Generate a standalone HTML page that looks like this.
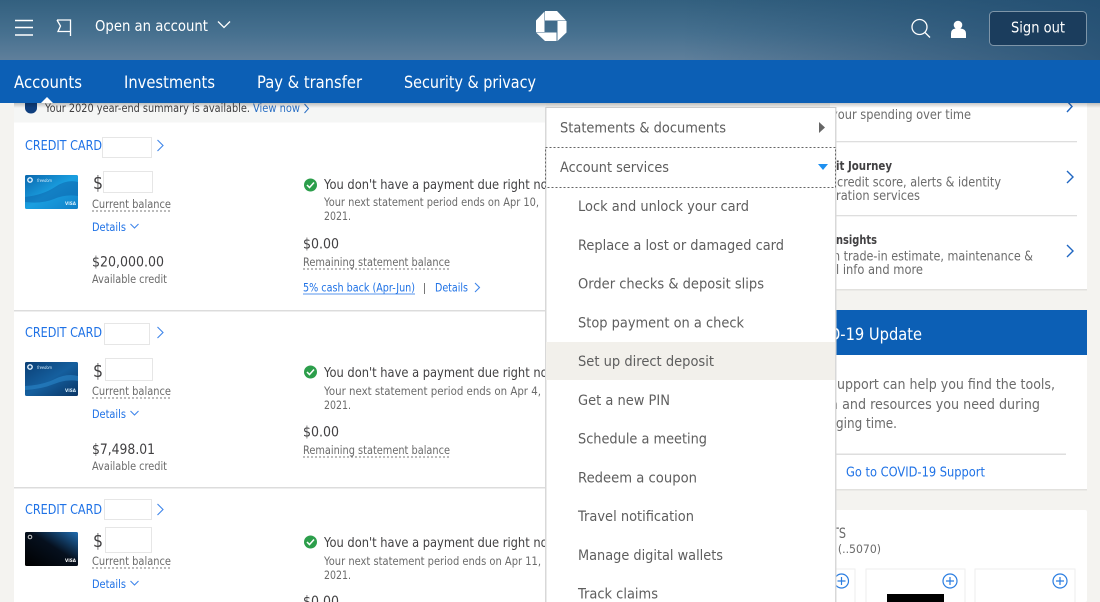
<!DOCTYPE html>
<html lang="en"><head><meta charset="utf-8"><title>Accounts</title>
<style>
html,body{margin:0;padding:0;width:1100px;height:602px;overflow:hidden;background:#f4f3f0}
svg{display:block}
text{font-family:"DejaVu Sans","Liberation Sans",sans-serif;white-space:pre}
.w{fill:#fff}.d{fill:#414042}.g{fill:#6b6b6b}.b{fill:#1f72e6}.m{fill:#5e5e5e}
.bl{fill:none;stroke:#3f86ea;stroke-width:1.100}
.dash{stroke:#777;stroke-width:1;stroke-dasharray:2 2}
.box{fill:#fff;stroke:#e6e6e6;stroke-width:1}
</style></head><body>
<svg width="1100" height="602" viewBox="0 0 1100 602" xmlns="http://www.w3.org/2000/svg" lang="en">
<defs>
<linearGradient id="hb" x1="0" y1="0" x2="0" y2="1"><stop offset="0" stop-color="#33607f"/><stop offset=".55" stop-color="#46708f"/><stop offset="1" stop-color="#5f7f9b"/></linearGradient>
<linearGradient id="hr" x1="0" y1="0" x2="1" y2="0"><stop offset="0" stop-color="#1f4a6e" stop-opacity="0"/><stop offset=".62" stop-color="#1f4a6e" stop-opacity="0"/><stop offset="1" stop-color="#1f4a6e" stop-opacity=".75"/></linearGradient>
<linearGradient id="c1" x1="0" y1="0" x2="1" y2="1"><stop offset="0" stop-color="#0a67ad"/><stop offset=".5" stop-color="#1a9fe0"/><stop offset="1" stop-color="#1080c8"/></linearGradient>
<linearGradient id="c2" x1="0" y1="0" x2="1" y2="1"><stop offset="0" stop-color="#0b3f75"/><stop offset=".5" stop-color="#155f9e"/><stop offset="1" stop-color="#0a3565"/></linearGradient>
<linearGradient id="c3" x1="0" y1="1" x2="1" y2="0"><stop offset="0" stop-color="#000"/><stop offset=".55" stop-color="#06101e"/><stop offset="1" stop-color="#1f6cb0"/></linearGradient>
<linearGradient id="sh" x1="0" y1="0" x2="0" y2="1"><stop offset="0" stop-color="#000" stop-opacity=".22"/><stop offset="1" stop-color="#000" stop-opacity="0"/></linearGradient>
</defs>

<rect width="1100" height="602" fill="#f4f3f0"/>

<!-- left accounts card -->
<rect x="14" y="103" width="532" height="499" fill="#fff"/>
<rect x="14" y="103" width="532" height="19.500" fill="#f5f6f5"/>
<path d="M25 103h12v5a6 5.500 0 0 1-12 0z" fill="#0f3f7e"/>
<text x="45" y="112" font-size="11.200" class="d" textLength="205" lengthAdjust="spacingAndGlyphs">Your 2020 year-end summary is available.</text>
<text x="253" y="112" font-size="11.200" fill="#2a6fc4" textLength="47" lengthAdjust="spacingAndGlyphs">View now</text>
<path d="M304.500 104l4 4.500-4 4.500" fill="none" stroke="#2a6fc4" stroke-width="1"/>
<rect x="14" y="310" width="532" height="1.500" fill="#dcdcdc"/>
<rect x="14" y="487" width="532" height="1.500" fill="#dcdcdc"/>

<!-- row 1 -->
<text x="25" y="150" font-size="13.200" class="b" textLength="77" lengthAdjust="spacingAndGlyphs">CREDIT CARD</text>
<rect x="102.500" y="137.500" width="49" height="20" class="box"/>
<path d="M157.500 140l5.500 5.500-5.500 5.500" class="bl"/>
<rect x="25" y="175" width="53" height="34" rx="1.500" fill="url(#c1)"/>
<path d="M25 197q18-2 30-10t23-5v14q-12-2-24 3t-29 3z" fill="#0c66ad" opacity=".55"/>
<circle cx="30" cy="180" r="2.200" fill="none" stroke="#e6f4ff" stroke-width="1.400"/>
<text x="37" y="182" font-size="4" font-style="italic" fill="#d8eefc" textLength="15" lengthAdjust="spacingAndGlyphs">freedom</text>
<text x="65" y="205" font-size="4.500" fill="#d8eefc" font-weight="700" textLength="11" lengthAdjust="spacingAndGlyphs">VISA</text>
<text x="93" y="189" font-size="19" class="d" textLength="10" lengthAdjust="spacingAndGlyphs">$</text>
<rect x="103.500" y="171.500" width="49" height="21" class="box"/>
<text x="92" y="208" font-size="11.800" class="g" textLength="79" lengthAdjust="spacingAndGlyphs">Current balance</text>
<line x1="92" y1="211" x2="172" y2="211" class="dash"/>
<text x="92" y="231" font-size="11.800" class="b" textLength="34" lengthAdjust="spacingAndGlyphs">Details</text>
<path d="M130.500 224l4 4 4-4" class="bl" stroke-width="1"/>
<text x="92" y="266.500" font-size="14.500" class="d" textLength="72" lengthAdjust="spacingAndGlyphs">$20,000.00</text>
<text x="92" y="283" font-size="11.800" class="g" textLength="75" lengthAdjust="spacingAndGlyphs">Available credit</text>
<circle cx="310.500" cy="185" r="6.500" fill="#2c9e4b"/>
<path d="M307 185l2.500 2.500 4.500-5" fill="none" stroke="#fff" stroke-width="1.500"/>
<text x="324" y="189" font-size="13.400" class="d" textLength="233" lengthAdjust="spacingAndGlyphs">You don't have a payment due right now</text>
<text x="324" y="206" font-size="11.200" class="g" textLength="215" lengthAdjust="spacingAndGlyphs">Your next statement period ends on Apr 10,</text>
<text x="324" y="220" font-size="11.200" class="g" textLength="27" lengthAdjust="spacingAndGlyphs">2021.</text>
<text x="303" y="248.500" font-size="14.500" class="d" textLength="36" lengthAdjust="spacingAndGlyphs">$0.00</text>
<text x="303" y="266" font-size="11.800" class="g" textLength="147" lengthAdjust="spacingAndGlyphs">Remaining statement balance</text>
<line x1="303" y1="269" x2="450" y2="269" class="dash"/>
<text x="303" y="291.500" font-size="11.800" class="b" textLength="112" lengthAdjust="spacingAndGlyphs">5% cash back (Apr-Jun)</text>
<line x1="303" y1="294" x2="415" y2="294" stroke="#1f72e6" stroke-width=".8"/>
<rect x="424" y="283" width="1" height="11" fill="#777"/>
<text x="435" y="291.500" font-size="11.800" class="b" textLength="33" lengthAdjust="spacingAndGlyphs">Details</text>
<path d="M475 283l4.500 4.500-4.500 4.500" class="bl" stroke-width="1"/>

<!-- row 2 -->
<text x="25" y="337" font-size="13.200" class="b" textLength="77" lengthAdjust="spacingAndGlyphs">CREDIT CARD</text>
<rect x="104.500" y="323.500" width="45" height="21" class="box"/>
<path d="M157.500 327l5.500 5.500-5.500 5.500" class="bl"/>
<rect x="25" y="362" width="53" height="34" rx="1.500" fill="url(#c2)"/>
<path d="M25 386q18-1 30-7t23-3v5q-12-2-24 3t-29 6z" fill="#2a86c8" opacity=".6"/>
<circle cx="30" cy="367" r="2.200" fill="none" stroke="#e6f4ff" stroke-width="1.400"/>
<text x="37" y="369" font-size="4" font-style="italic" fill="#d8eefc" textLength="15" lengthAdjust="spacingAndGlyphs">freedom</text>
<text x="65" y="392" font-size="4.500" fill="#d8eefc" font-weight="700" textLength="11" lengthAdjust="spacingAndGlyphs">VISA</text>
<text x="93" y="377" font-size="19" class="d" textLength="10" lengthAdjust="spacingAndGlyphs">$</text>
<rect x="105.500" y="358.500" width="47" height="22" class="box"/>
<text x="92" y="395" font-size="11.800" class="g" textLength="79" lengthAdjust="spacingAndGlyphs">Current balance</text>
<line x1="92" y1="398" x2="172" y2="398" class="dash"/>
<text x="92" y="418" font-size="11.800" class="b" textLength="34" lengthAdjust="spacingAndGlyphs">Details</text>
<path d="M130.500 411l4 4 4-4" class="bl" stroke-width="1"/>
<text x="92" y="454" font-size="14.500" class="d" textLength="63" lengthAdjust="spacingAndGlyphs">$7,498.01</text>
<text x="92" y="470" font-size="11.800" class="g" textLength="75" lengthAdjust="spacingAndGlyphs">Available credit</text>
<circle cx="310.500" cy="372" r="6.500" fill="#2c9e4b"/>
<path d="M307 372l2.500 2.500 4.500-5" fill="none" stroke="#fff" stroke-width="1.500"/>
<text x="324" y="377" font-size="13.400" class="d" textLength="233" lengthAdjust="spacingAndGlyphs">You don't have a payment due right now</text>
<text x="324" y="395" font-size="11.200" class="g" textLength="217" lengthAdjust="spacingAndGlyphs">Your next statement period ends on Apr 4,</text>
<text x="324" y="409" font-size="11.200" class="g" textLength="27" lengthAdjust="spacingAndGlyphs">2021.</text>
<text x="303" y="436.500" font-size="14.500" class="d" textLength="36" lengthAdjust="spacingAndGlyphs">$0.00</text>
<text x="303" y="454" font-size="11.800" class="g" textLength="147" lengthAdjust="spacingAndGlyphs">Remaining statement balance</text>
<line x1="303" y1="457" x2="450" y2="457" class="dash"/>

<!-- row 3 -->
<text x="25" y="514" font-size="13.200" class="b" textLength="77" lengthAdjust="spacingAndGlyphs">CREDIT CARD</text>
<rect x="104.500" y="499.500" width="47" height="20" class="box"/>
<path d="M157.500 504l5.500 5.500-5.500 5.500" class="bl"/>
<rect x="25" y="532" width="53" height="34" rx="1.500" fill="url(#c3)"/>
<circle cx="30" cy="537" r="1.800" fill="none" stroke="#ccc"/>
<text x="65" y="562" font-size="4.500" class="w" font-weight="700" textLength="11" lengthAdjust="spacingAndGlyphs">VISA</text>
<text x="93" y="547" font-size="19" class="d" textLength="10" lengthAdjust="spacingAndGlyphs">$</text>
<rect x="105.500" y="527.500" width="46" height="25" class="box"/>
<text x="92" y="565" font-size="11.800" class="g" textLength="79" lengthAdjust="spacingAndGlyphs">Current balance</text>
<line x1="92" y1="568" x2="172" y2="568" class="dash"/>
<text x="92" y="588" font-size="11.800" class="b" textLength="34" lengthAdjust="spacingAndGlyphs">Details</text>
<path d="M130.500 581l4 4 4-4" class="bl" stroke-width="1"/>
<circle cx="310.500" cy="542" r="6.500" fill="#2c9e4b"/>
<path d="M307 542l2.500 2.500 4.500-5" fill="none" stroke="#fff" stroke-width="1.500"/>
<text x="324" y="547" font-size="13.400" class="d" textLength="233" lengthAdjust="spacingAndGlyphs">You don't have a payment due right now</text>
<text x="324" y="565" font-size="11.200" class="g" textLength="217" lengthAdjust="spacingAndGlyphs">Your next statement period ends on Apr 11,</text>
<text x="324" y="579" font-size="11.200" class="g" textLength="27" lengthAdjust="spacingAndGlyphs">2021.</text>
<text x="303" y="606" font-size="14.500" class="d" textLength="36" lengthAdjust="spacingAndGlyphs">$0.00</text>

<!-- right column card 1 -->
<rect x="830" y="103" width="257" height="186" fill="#fff"/>
<rect x="830" y="289" width="257" height="1.500" fill="#e2e1de"/>
<text x="831" y="119" font-size="13" class="g" textLength="140" lengthAdjust="spacingAndGlyphs">your spending over time</text>
<rect x="830" y="141" width="247" height="1.300" fill="#dedede"/>
<rect x="830" y="215" width="247" height="1.300" fill="#dedede"/>
<text x="836" y="170" font-size="12.800" font-weight="700" class="d" textLength="56" lengthAdjust="spacingAndGlyphs">it Journey</text>
<text x="837" y="186.500" font-size="13" class="g" textLength="164" lengthAdjust="spacingAndGlyphs">credit score, alerts &amp; identity</text>
<text x="836" y="200" font-size="13" class="g" textLength="84" lengthAdjust="spacingAndGlyphs">ration services</text>
<text x="836" y="244" font-size="12.800" font-weight="700" class="d" textLength="41" lengthAdjust="spacingAndGlyphs">nsights</text>
<text x="833" y="260.500" font-size="13" class="g" textLength="200" lengthAdjust="spacingAndGlyphs">n trade-in estimate, maintenance &amp;</text>
<text x="836" y="274" font-size="13" class="g" textLength="87" lengthAdjust="spacingAndGlyphs">l info and more</text>
<path d="M1067 101l5 5.500-5 5.500M1067 171l6 6-6 6M1067 245l6 6-6 6" fill="none" stroke="#1f66c2" stroke-width="1.400"/>

<!-- covid card -->
<rect x="830" y="310" width="257" height="179" fill="#fff"/>
<rect x="830" y="489" width="257" height="1.500" fill="#e2e1de"/>
<rect x="830" y="310" width="257" height="45" fill="#0c5fb5"/>
<text x="829" y="340" font-size="16.500" class="w" textLength="93" lengthAdjust="spacingAndGlyphs">D-19 Update</text>
<text x="829" y="389" font-size="14.500" class="g" textLength="226" lengthAdjust="spacingAndGlyphs">Support can help you find the tools,</text>
<text x="830" y="409" font-size="14.500" class="g" textLength="210" lengthAdjust="spacingAndGlyphs">n and resources you need during</text>
<text x="836" y="428" font-size="14.500" class="g" textLength="61" lengthAdjust="spacingAndGlyphs">ging time.</text>
<rect x="830" y="453.500" width="236" height="1.500" fill="#dedede"/>
<text x="846" y="476.500" font-size="13.200" class="b" textLength="139" lengthAdjust="spacingAndGlyphs">Go to COVID-19 Support</text>

<!-- offers card -->
<rect x="830" y="510" width="257" height="92" fill="#fff" rx="2"/>
<text x="832" y="538" font-size="14.500" class="g" textLength="14" lengthAdjust="spacingAndGlyphs">TS</text>
<text x="826" y="553" font-size="11.500" class="g" textLength="55" lengthAdjust="spacingAndGlyphs">D (..5070)</text>
<rect x="830" y="569" width="25" height="34" fill="#fff" stroke="#eee"/>
<rect x="866" y="569" width="99" height="34" fill="#fff" stroke="#eee"/>
<rect x="975" y="569" width="100" height="34" fill="#fff" stroke="#eee"/>
<rect x="887" y="594" width="57" height="8" fill="#000"/>
<g fill="none" stroke="#2a7de1" stroke-width="1.200">
<circle cx="841.500" cy="581" r="7"/><path d="M841.500 577v8M837.500 581h8"/>
<circle cx="950" cy="581" r="7"/><path d="M950 577v8M946 581h8"/>
<circle cx="1060" cy="581" r="7"/><path d="M1060 577v8M1056 581h8"/>
</g>

<!-- menu -->
<rect x="546" y="107" width="289.500" height="495" fill="#fff"/>
<rect x="545" y="107" width="1.500" height="495" fill="#d8d8d8"/>
<rect x="835" y="107" width="1.500" height="495" fill="#d8d8d8"/>
<rect x="546" y="107" width="290" height="1" fill="#cfcfcf"/>
<rect x="546" y="342" width="289" height="38" fill="#f2f0eb"/>
<text x="560" y="132.500" font-size="14.500" class="m" textLength="166" lengthAdjust="spacingAndGlyphs">Statements &amp; documents</text>
<path d="M819 122l6 5.500-6 5.500z" fill="#666"/>
<rect x="545.500" y="147.500" width="290" height="40" fill="none" stroke="#666" stroke-width="1" stroke-dasharray="2 2"/>
<text x="560" y="172" font-size="14.500" class="m" textLength="109" lengthAdjust="spacingAndGlyphs">Account services</text>
<path d="M818 164h10l-5 6z" fill="#1e90f0"/>
<g font-size="14.500">
<text x="578" y="211" class="m" textLength="171" lengthAdjust="spacingAndGlyphs">Lock and unlock your card</text>
<text x="578" y="250" class="m" textLength="206" lengthAdjust="spacingAndGlyphs">Replace a lost or damaged card</text>
<text x="578" y="288.500" class="m" textLength="186" lengthAdjust="spacingAndGlyphs">Order checks &amp; deposit slips</text>
<text x="578" y="327.500" class="m" textLength="166" lengthAdjust="spacingAndGlyphs">Stop payment on a check</text>
<text x="578" y="366" class="m" textLength="136" lengthAdjust="spacingAndGlyphs">Set up direct deposit</text>
<text x="578" y="405" class="m" textLength="92" lengthAdjust="spacingAndGlyphs">Get a new PIN</text>
<text x="578" y="443.500" class="m" textLength="129" lengthAdjust="spacingAndGlyphs">Schedule a meeting</text>
<text x="578" y="482.500" class="m" textLength="119" lengthAdjust="spacingAndGlyphs">Redeem a coupon</text>
<text x="578" y="521" class="m" textLength="116" lengthAdjust="spacingAndGlyphs">Travel notification</text>
<text x="578" y="560" class="m" textLength="145" lengthAdjust="spacingAndGlyphs">Manage digital wallets</text>
<text x="578" y="598.500" class="m" textLength="80" lengthAdjust="spacingAndGlyphs">Track claims</text>
</g>

<!-- header -->
<rect x="0" y="103" width="1100" height="5" fill="url(#sh)"/>
<rect width="1100" height="60" fill="url(#hb)"/>
<rect width="1100" height="60" fill="url(#hr)"/>
<rect y="60" width="1100" height="43" fill="#0c5fb5"/>
<path d="M15 20.500h18M15 27.500h18M15 35h18" stroke="#fff" stroke-width="1.500"/>
<path d="M57 20h13.500v16M70.500 31.500H58l2.500-5.500L57 20" fill="none" stroke="#fff" stroke-width="1.300"/>
<text x="95" y="31" font-size="15.500" class="w" textLength="113" lengthAdjust="spacingAndGlyphs">Open an account</text>
<path d="M218 21.500l6 6 6-6" fill="none" stroke="#fff" stroke-width="1.300"/>
<g fill="#fff">
<path d="M545 11h12l9 9.500h-21z"/>
<path d="M557.500 21H566.500v11.500l-9 8.500z"/>
<path d="M556.500 32.500V41H545l-9-8.500z"/>
<path d="M544.500 32H536V20.500l8.500-9z"/>
</g>
<circle cx="919.500" cy="27" r="7.500" fill="none" stroke="#fff" stroke-width="1.300"/>
<path d="M925 32.500l5 5" stroke="#fff" stroke-width="1.300"/>
<circle cx="958" cy="25" r="4.300" fill="#fff"/>
<path d="M951 38v-4.500q0-4.500 4.500-5h5q5.500 .5 5.500 5V38z" fill="#fff"/>
<rect x="989.500" y="11.500" width="97" height="34" rx="4" fill="#1b3d5d" stroke="#7e95a8"/>
<text x="1011" y="32.500" font-size="15.500" class="w" textLength="54" lengthAdjust="spacingAndGlyphs">Sign out</text>
<text x="14" y="88" font-size="17" class="w" textLength="68" lengthAdjust="spacingAndGlyphs">Accounts</text>
<text x="124" y="88" font-size="17" class="w" textLength="91" lengthAdjust="spacingAndGlyphs">Investments</text>
<text x="257" y="88" font-size="17" class="w" textLength="105" lengthAdjust="spacingAndGlyphs">Pay &amp; transfer</text>
<text x="404" y="88" font-size="17" class="w" textLength="132" lengthAdjust="spacingAndGlyphs">Security &amp; privacy</text>
<path d="M41 103l6-6 6 6z" fill="#fff"/>
<rect x="0" y="103" width="14" height="499" fill="#f4f3f0"/>
</svg>
</body></html>
